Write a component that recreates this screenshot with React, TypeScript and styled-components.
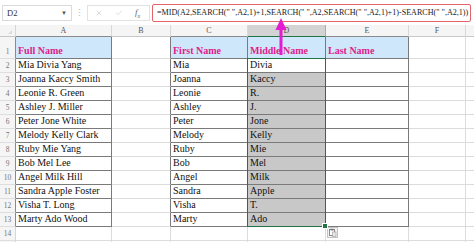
import styled, { createGlobalStyle } from "styled-components";
import { X, Check } from "lucide-react";

const GlobalStyle = createGlobalStyle`
  html, body { margin: 0; padding: 0; background: #fff; }
  body { font-family: "Liberation Serif", "Times New Roman", serif; }
`;

const SERIF = `"Liberation Serif", "Times New Roman", serif`;

const Page = styled.div`
  position: relative;
  width: 474px;
  height: 242px;
  overflow: hidden;
  background: #fff;
  font-family: ${SERIF};
`;

const Toolbar = styled.div`
  display: flex;
  align-items: center;
  height: 25px;
  padding-left: 2px;
  box-sizing: border-box;
`;

const NameBox = styled.div`
  display: flex;
  align-items: center;
  justify-content: space-between;
  width: 70px;
  height: 16px;
  box-sizing: border-box;
  border: 1px solid #dadada;
  padding: 0 4px 0 4px;
  font-family: ${SERIF};
  font-size: 8.5px;
  color: #333;
`;

const Caret = styled.span`
  font-size: 6px;
  color: #555;
`;

const Dots = styled.div`
  width: 15px;
  text-align: center;
  font-size: 9px;
  color: #b0b0b0;
`;

const FuncBox = styled.div`
  display: flex;
  align-items: center;
  gap: 12px;
  width: 63px;
  height: 16px;
  box-sizing: border-box;
  border: 1px solid #e2e2e2;
  padding-left: 7px;
  color: #b8b8b8;
`;

const Fx = styled.span`
  font-family: ${SERIF};
  font-style: italic;
  font-size: 9px;
  color: #666;
  sub {
    font-size: 6px;
  }
`;

const FormulaBox = styled.div`
  display: flex;
  align-items: center;
  margin-left: 2px;
  width: 319px;
  height: 18px;
  box-sizing: border-box;
  border: 1.5px solid #e5646c;
  border-radius: 2px;
  padding-left: 4px;
  font-family: ${SERIF};
  font-size: 8.1px;
  color: #222;
  white-space: nowrap;
  overflow: hidden;
`;

const Sheet = styled.div`
  display: grid;
  grid-template-columns: 16px 96px 59px 77px 78px 83px 57px 40px;
  grid-template-rows: 12px 22px repeat(14, 14px);
  font-family: ${SERIF};
`;

type Pos = { $r: number; $c: number };

const Corner = styled.div<Pos>`
  grid-row: ${(p) => p.$r};
  grid-column: ${(p) => p.$c};
  position: relative;
  background: #f5f5f5;
  border-right: 1px solid #d6d6d6;
  border-bottom: 1px solid #c8c8c8;
  box-sizing: border-box;
  &::after {
    content: "";
    position: absolute;
    right: 3px;
    bottom: 2px;
    border-left: 4px solid transparent;
    border-bottom: 4px solid #dcdcdc;
  }
`;

const ColHead = styled.div<Pos & { $active?: boolean; $dark?: boolean }>`
  grid-row: ${(p) => p.$r};
  grid-column: ${(p) => p.$c};
  display: flex;
  align-items: center;
  justify-content: center;
  box-sizing: border-box;
  background: ${(p) => (p.$active ? "#d3d3d3" : "#f5f5f5")};
  border-right: 1px solid ${(p) => (p.$active ? "#9fb3a9" : "#d8d8d8")};
  border-bottom: 1px solid ${(p) => (p.$active ? "#217346" : p.$dark ? "#8a8a8a" : "#c8c8c8")};
  font-size: 8px;
  color: #555;
`;

const RowHead = styled.div<Pos & { $dark?: boolean }>`
  grid-row: ${(p) => p.$r};
  grid-column: ${(p) => p.$c};
  display: flex;
  align-items: flex-end;
  justify-content: center;
  padding-bottom: 2px;
  box-sizing: border-box;
  background: #f5f5f5;
  border-right: 1px solid ${(p) => (p.$dark ? "#8a8a8a" : "#d6d6d6")};
  border-bottom: 1px solid #dedede;
  font-size: 7.5px;
  color: #777;
`;

const Cell = styled.div<
  Pos & { $fill?: string; $rb?: string; $bb?: string; $head?: boolean }
>`
  grid-row: ${(p) => p.$r};
  grid-column: ${(p) => p.$c};
  display: flex;
  align-items: flex-end;
  box-sizing: border-box;
  padding: 0 0 1px 2px;
  background: ${(p) => p.$fill || "#fff"};
  border-right: 1px solid ${(p) => p.$rb || "#dcdcdc"};
  border-bottom: 1px solid ${(p) => p.$bb || "#dcdcdc"};
  font-family: ${SERIF};
  font-size: 10px;
  line-height: 12px;
  white-space: nowrap;
  overflow: hidden;
  color: ${(p) => (p.$head ? "#e0218c" : "#111")};
  font-weight: ${(p) => (p.$head ? 700 : 400)};
`;

const Selection = styled.div`
  grid-row: 3 / 15;
  grid-column: 5;
  position: relative;
  margin: -1px 0 0 -1px;
  border: 1.5px solid #217346;
  pointer-events: none;
  z-index: 2;
`;

const FillHandle = styled.div`
  position: absolute;
  right: -3px;
  bottom: -3px;
  width: 4px;
  height: 4px;
  background: #217346;
  border: 1px solid #fff;
`;

const PasteIcon = styled.svg`
  align-self: flex-start;
  margin: 0 0 0 -1px;
`;

const Arrow = styled.svg`
  position: absolute;
  left: 274px;
  top: 16px;
  z-index: 3;
`;

const DARK = "#7a7a7a";
const TABLE_COLS = [2, 4, 5, 6];
const LETTERS = ["A", "B", "C", "D", "E", "F", ""];

const rows: [string, string, string][] = [
  ["Mia Divia Yang", "Mia", "Divia"],
  ["Joanna Kaccy Smith", "Joanna", "Kaccy"],
  ["Leonie R. Green", "Leonie", "R."],
  ["Ashley J. Miller", "Ashley", "J."],
  ["Peter Jone White", "Peter", "Jone"],
  ["Melody Kelly Clark", "Melody", "Kelly"],
  ["Ruby Mie Yang", "Ruby", "Mie"],
  ["Bob Mel Lee", "Bob", "Mel"],
  ["Angel Milk Hill", "Angel", "Milk"],
  ["Sandra Apple Foster", "Sandra", "Apple"],
  ["Visha T. Long", "Visha", "T."],
  ["Marty Ado Wood", "Marty", "Ado"],
];

const headers = ["Full Name", "", "First Name", "Middle Name", "Last Name", "", ""];

function cellText(row: number, col: number) {
  if (row === 1) return headers[col - 2];
  const d = rows[row - 2];
  if (!d) return "";
  if (col === 2) return d[0];
  if (col === 4) return d[1];
  if (col === 5) return d[2];
  return "";
}

export default function App() {
  const sheetRows = Array.from({ length: 15 }, (_, i) => i + 1);
  const cols = [2, 3, 4, 5, 6, 7, 8];

  return (
    <Page>
      <GlobalStyle />
      <Toolbar>
        <NameBox>
          D2
          <Caret>▼</Caret>
        </NameBox>
        <Dots>⋮</Dots>
        <FuncBox>
          <X size={8} strokeWidth={1.5} />
          <Check size={8} strokeWidth={1.5} />
          <Fx>
            f<sub>x</sub>
          </Fx>
        </FuncBox>
        <FormulaBox>
          =MID(A2,SEARCH(" ",A2,1)+1,SEARCH(" ",A2,SEARCH(" ",A2,1)+1)-SEARCH(" ",A2,1))
        </FormulaBox>
      </Toolbar>

      <Sheet>
        <Corner $r={1} $c={1} />
        {LETTERS.map((l, i) => (
          <ColHead
            key={i}
            $r={1}
            $c={i + 2}
            $active={l === "D"}
            $dark={TABLE_COLS.includes(i + 2)}
          >
            {l}
          </ColHead>
        ))}

        {sheetRows.map((r) => {
          const inTable = r <= 13;
          return [
            <RowHead key={`h${r}`} $r={r + 1} $c={1} $dark={inTable}>
              {r}
            </RowHead>,
            ...cols.map((c) => {
              const tab = inTable && TABLE_COLS.includes(c);
              const leftOfTable = inTable && c === 3;
              const fill =
                r === 1 && tab
                  ? "#cfe7fa"
                  : c === 5 && r >= 3 && r <= 13
                  ? "#c8c8c8"
                  : undefined;
              return (
                <Cell
                  key={`${r}-${c}`}
                  $r={r + 1}
                  $c={c}
                  $fill={fill}
                  $rb={tab || leftOfTable ? DARK : undefined}
                  $bb={tab ? DARK : undefined}
                  $head={r === 1}
                >
                  {cellText(r, c)}
                  {r === 14 && c === 6 && (
                    <PasteIcon width="11" height="11" viewBox="0 0 11 11">
                      <rect x="0.5" y="0.5" width="10" height="10" fill="#f3f3f3" stroke="#c4c4c4" />
                      <rect x="2.5" y="2.5" width="5" height="6" fill="#fff" stroke="#8a8a8a" />
                      <rect x="3.5" y="1.8" width="3" height="1.6" fill="#6f6f6f" />
                      <rect x="5.5" y="5" width="3.5" height="4.5" fill="#e8e8e8" stroke="#9a9a9a" strokeWidth="0.6" />
                    </PasteIcon>
                  )}
                </Cell>
              );
            }),
          ];
        })}

        <Selection>
          <FillHandle />
        </Selection>
      </Sheet>

      <Arrow width="14" height="40" viewBox="0 0 14 40">
        <polygon points="7,2 1.5,14 12.5,14" fill="#e31bd2" />
        <rect x="5.5" y="13" width="3" height="26" fill="#e31bd2" />
      </Arrow>
    </Page>
  );
}
